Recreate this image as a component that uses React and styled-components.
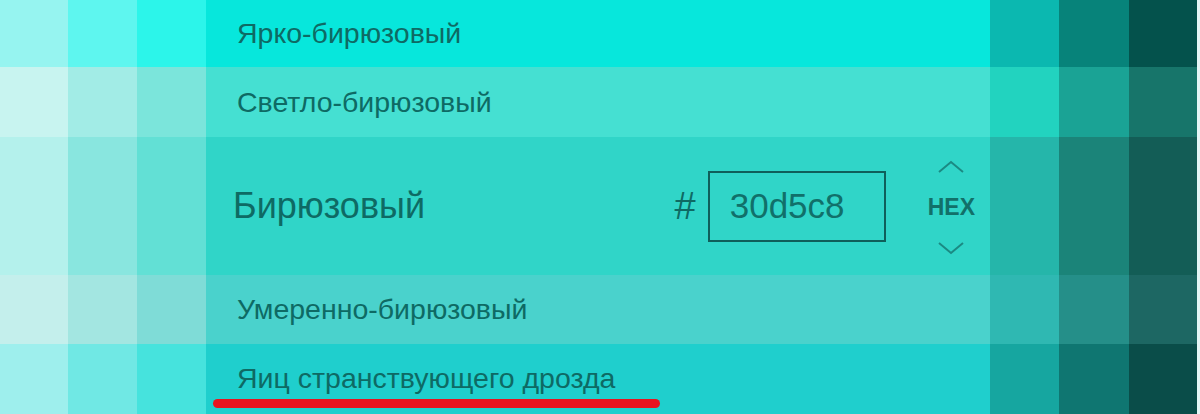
import React from 'react'
import styled, { createGlobalStyle } from 'styled-components'

const GlobalStyle = createGlobalStyle`
  html, body {
    margin: 0;
    padding: 0;
    background: #e4f6f6;
  }
  body {
    font-family: "Liberation Sans", Arial, sans-serif;
  }
`

const rows = [
  {
    name: 'Ярко-бирюзовый',
    height: 67,
    left: ['#96f4f0', '#5ef6ef', '#2cf5ea'],
    center: '#07e7dc',
    right: ['#0bb8b0', '#07837a', '#04524c'],
  },
  {
    name: 'Светло-бирюзовый',
    height: 70,
    left: ['#c8f4f0', '#a2ece6', '#7be5db'],
    center: '#45e0d2',
    right: ['#22d3bf', '#1aa395', '#17756a'],
  },
  {
    name: 'Бирюзовый',
    height: 138,
    main: true,
    left: ['#b4f1ec', '#89e6df', '#62e0d5'],
    center: '#30d5c8',
    right: ['#25b6aa', '#1b8479', '#135d56'],
  },
  {
    name: 'Умеренно-бирюзовый',
    height: 69,
    left: ['#c4efec', '#a3e6e1', '#7fdcd7'],
    center: '#4ad2cc',
    right: ['#2fb8b2', '#258f89', '#1d6763'],
  },
  {
    name: 'Яиц странствующего дрозда',
    height: 70,
    marked: true,
    left: ['#9eefed', '#70e8e4', '#46e3dd'],
    center: '#1fcfcd',
    right: ['#16a6a0', '#0f7671', '#0a4d49'],
  },
]

const Palette = () => (
  <Board>
    {rows.map((row) => (
      <Row key={row.name} $height={row.height}>
        {row.left.map((c) => (
          <Swatch key={c} $color={c} />
        ))}
        <Panel $color={row.center}>
          {row.main ? (
            <>
              <BigName>{row.name}</BigName>
              <HexEditor />
            </>
          ) : (
            <Name $marked={row.marked}>{row.name}</Name>
          )}
        </Panel>
        {row.right.map((c) => (
          <Swatch key={c} $color={c} />
        ))}
      </Row>
    ))}
  </Board>
)

const Chevron = ({ up }) => (
  <svg width="28" height="14" viewBox="0 0 28 14">
    <polyline
      points={up ? '2,12 14,2 26,12' : '2,2 14,12 26,2'}
      fill="none"
      stroke="#1b8a83"
      strokeWidth="2"
    />
  </svg>
)

const HexEditor = () => (
  <Editor>
    <Hash>#</Hash>
    <HexBox>30d5c8</HexBox>
    <Mode>
      <Chevron up />
      <ModeLabel>HEX</ModeLabel>
      <Chevron />
    </Mode>
  </Editor>
)

export default function App() {
  return (
    <>
      <GlobalStyle />
      <Palette />
    </>
  )
}

const Board = styled.div`
  width: 1197px;
  display: flex;
  flex-direction: column;
`
const Row = styled.div`
  display: grid;
  grid-template-columns: 68px 69px 69px 784px 69px 70px 68px;
  height: ${(p) => p.$height}px;
`
const Swatch = styled.div`
  background: ${(p) => p.$color};
`
const Panel = styled.div`
  background: ${(p) => p.$color};
  display: flex;
  align-items: center;
  padding-left: 31px;
  padding-right: 15px;
  color: #0e6a64;
`
const Name = styled.span`
  position: relative;
  font-size: 28.5px;
  margin-top: ${(p) => (p.$marked ? '-2px' : '0')};
  &::after {
    content: '';
    display: ${(p) => (p.$marked ? 'block' : 'none')};
    position: absolute;
    left: -24px;
    right: -45px;
    bottom: -13px;
    height: 9px;
    border-radius: 5px;
    background: #e8141f;
  }
`
const BigName = styled.span`
  font-size: 36px;
  flex: 1;
  margin-left: -4px;
  margin-top: -1px;
`
const Editor = styled.div`
  display: flex;
  align-items: center;
`
const Hash = styled.span`
  font-size: 38px;
  margin-right: 12px;
`
const HexBox = styled.div`
  box-sizing: border-box;
  width: 178px;
  height: 71px;
  border: 2px solid #0f5f5a;
  display: flex;
  align-items: center;
  padding-left: 20px;
  font-size: 35px;
  color: #11706a;
`
const Mode = styled.div`
  display: flex;
  flex-direction: column;
  align-items: center;
  gap: 20px;
  margin-left: 42px;
  margin-top: 2px;
`
const ModeLabel = styled.span`
  font-size: 23px;
  font-weight: bold;
  color: #127069;
`
